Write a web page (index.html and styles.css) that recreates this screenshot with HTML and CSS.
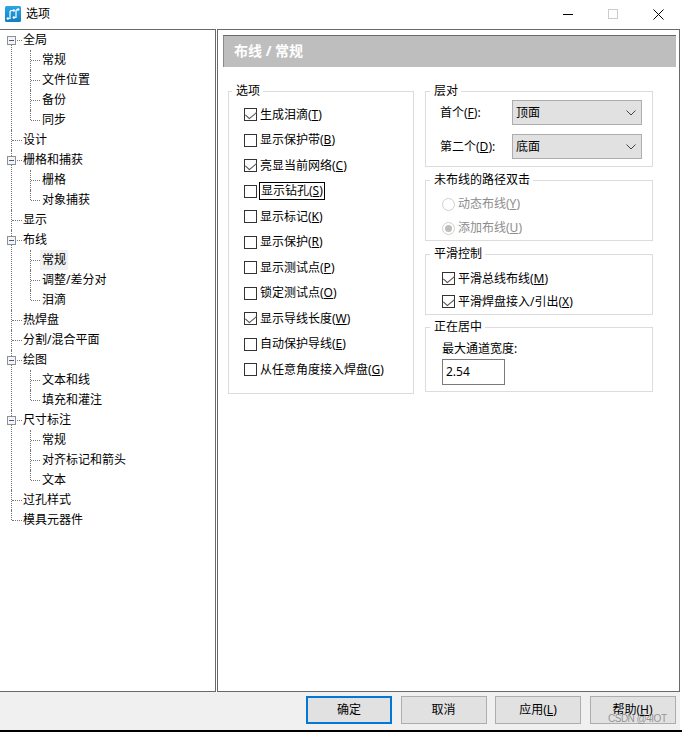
FILE: index.html
```html
<!DOCTYPE html>
<html lang="zh-CN">
<head>
    <meta charset="UTF-8">
    <title>选项</title>
    <link rel="stylesheet" href="styles.css">
</head>
<body>
    <div id="window">
        <!-- Title bar -->
        <div class="title-bar">
            <svg class="app-icon" width="16" height="16" viewBox="0 0 16 16">
                <defs>
                    <linearGradient id="icon-bg" x1="0" y1="0" x2="0" y2="1">
                        <stop offset="0" stop-color="#2aa6e6"/>
                        <stop offset="1" stop-color="#0f7fc0"/>
                    </linearGradient>
                </defs>
                <rect width="16" height="16" rx="1.500" fill="url(#icon-bg)"/>
                <path d="M2.500 12.500h2.500V5.500l1-1h3M8.500 11.500h2.500V4.500l1-1h1.500" fill="none" stroke="#fff" stroke-width="1.200"/>
                <circle cx="2.800" cy="12.500" r="1.200" fill="#fff"/>
                <circle cx="8.800" cy="4.500" r="1.200" fill="#fff"/>
                <circle cx="8.800" cy="11.500" r="1.200" fill="#fff"/>
                <circle cx="13.200" cy="3.500" r="1.200" fill="#fff"/>
            </svg>
            <span class="title-text">选项</span>
            <div class="window-buttons">
                <svg width="10" height="10" viewBox="0 0 10 10"><path d="M0 5.500h10" stroke="#000"/></svg>
                <svg width="10" height="10" viewBox="0 0 10 10"><rect x=".5" y=".5" width="9" height="9" fill="none" stroke="#ccc"/></svg>
                <svg width="11" height="11" viewBox="0 0 11 11"><path d="M.5 .5l10 10M10.500 .5l-10 10" stroke="#000"/></svg>
            </div>
        </div>

        <div class="main">
            <!-- Category tree -->
            <div class="tree-panel">
                <ul class="tree">
                    <li><div class="node"><span class="expander"></span>全局</div>
                        <ul>
                            <li><div class="node">常规</div></li>
                            <li><div class="node">文件位置</div></li>
                            <li><div class="node">备份</div></li>
                            <li><div class="node">同步</div></li>
                        </ul>
                    </li>
                    <li><div class="node">设计</div></li>
                    <li><div class="node"><span class="expander"></span>栅格和捕获</div>
                        <ul>
                            <li><div class="node">栅格</div></li>
                            <li><div class="node">对象捕获</div></li>
                        </ul>
                    </li>
                    <li><div class="node">显示</div></li>
                    <li><div class="node"><span class="expander"></span>布线</div>
                        <ul>
                            <li><div class="node selected">常规</div></li>
                            <li><div class="node">调整/差分对</div></li>
                            <li><div class="node">泪滴</div></li>
                        </ul>
                    </li>
                    <li><div class="node">热焊盘</div></li>
                    <li><div class="node">分割/混合平面</div></li>
                    <li><div class="node"><span class="expander"></span>绘图</div>
                        <ul>
                            <li><div class="node">文本和线</div></li>
                            <li><div class="node">填充和灌注</div></li>
                        </ul>
                    </li>
                    <li><div class="node"><span class="expander"></span>尺寸标注</div>
                        <ul>
                            <li><div class="node">常规</div></li>
                            <li><div class="node">对齐标记和箭头</div></li>
                            <li><div class="node">文本</div></li>
                        </ul>
                    </li>
                    <li><div class="node">过孔样式</div></li>
                    <li><div class="node">模具元器件</div></li>
                </ul>
            </div>

            <!-- Settings page -->
            <div class="page-panel">
                <div class="page-header">布线 / 常规</div>
                <div class="page-body">
                    <fieldset class="group options-group">
                        <legend>选项</legend>
                        <div class="group-body">
                            <div class="check-row"><span class="check on"></span><span>生成泪滴(<u>T</u>)</span></div>
                            <div class="check-row"><span class="check"></span><span>显示保护带(<u>B</u>)</span></div>
                            <div class="check-row"><span class="check on"></span><span>亮显当前网络(<u>C</u>)</span></div>
                            <div class="check-row"><span class="check"></span><span class="focused">显示钻孔(<u>S</u>)</span></div>
                            <div class="check-row"><span class="check"></span><span>显示标记(<u>K</u>)</span></div>
                            <div class="check-row"><span class="check"></span><span>显示保护(<u>R</u>)</span></div>
                            <div class="check-row"><span class="check"></span><span>显示测试点(<u>P</u>)</span></div>
                            <div class="check-row"><span class="check"></span><span>锁定测试点(<u>O</u>)</span></div>
                            <div class="check-row"><span class="check on"></span><span>显示导线长度(<u>W</u>)</span></div>
                            <div class="check-row"><span class="check"></span><span>自动保护导线(<u>E</u>)</span></div>
                            <div class="check-row"><span class="check"></span><span>从任意角度接入焊盘(<u>G</u>)</span></div>
                        </div>
                    </fieldset>

                    <div class="side-column">
                        <fieldset class="group layer-group">
                            <legend>层对</legend>
                            <div class="group-body">
                                <div class="combo-row">
                                    <label>首个(<u>F</u>):</label>
                                    <div class="combo"><span>顶面</span>
                                        <svg width="10" height="6" viewBox="0 0 10 6"><path d="M.5 .5L5 5l4.500-4.500" fill="none" stroke="#444"/></svg>
                                    </div>
                                </div>
                                <div class="combo-row">
                                    <label>第二个(<u>D</u>):</label>
                                    <div class="combo"><span>底面</span>
                                        <svg width="10" height="6" viewBox="0 0 10 6"><path d="M.5 .5L5 5l4.500-4.500" fill="none" stroke="#444"/></svg>
                                    </div>
                                </div>
                            </div>
                        </fieldset>

                        <fieldset class="group route-group">
                            <legend>未布线的路径双击</legend>
                            <div class="group-body">
                                <div class="radio-row"><span class="radio"></span><span>动态布线(<u>Y</u>)</span></div>
                                <div class="radio-row"><span class="radio on"></span><span>添加布线(<u>U</u>)</span></div>
                            </div>
                        </fieldset>

                        <fieldset class="group smooth-group">
                            <legend>平滑控制</legend>
                            <div class="group-body">
                                <div class="check-row short"><span class="check on"></span><span>平滑总线布线(<u>M</u>)</span></div>
                                <div class="check-row short"><span class="check on"></span><span>平滑焊盘接入/引出(<u>X</u>)</span></div>
                            </div>
                        </fieldset>

                        <fieldset class="group center-group">
                            <legend>正在居中</legend>
                            <div class="group-body">
                                <div class="field-label">最大通道宽度:</div>
                                <div class="text-box">2.54</div>
                            </div>
                        </fieldset>
                    </div>
                </div>
            </div>
        </div>

        <!-- Dialog buttons -->
        <div class="footer">
            <div class="btn default">确定</div>
            <div class="btn">取消</div>
            <div class="btn">应用(<u>L</u>)</div>
            <div class="btn">帮助(<u>H</u>)</div>
        </div>
        <div class="watermark">CSDN @4IOT</div>
    </div>
</body>
</html>
```

FILE: styles.css
```css
* {
    box-sizing: border-box;
}

html, body {
    margin: 0;
    padding: 0;
}

body {
    width: 682px;
    height: 732px;
    overflow: hidden;
    background: #fff;
    color: #000;
    font-family: "Noto Sans", "Noto Sans CJK SC", sans-serif;
    font-size: 12px;
    line-height: 16px;
}

#window {
    position: relative;
    width: 682px;
    height: 732px;
    border-bottom: 2px solid #000;
}

.title-bar {
    height: 29px;
    display: flex;
    align-items: center;
    padding: 0 18px 5px 5px;
}

.app-icon {
    margin-top: 4px;
}

.title-text {
    margin-left: 5px;
    margin-top: 3px;
}

.window-buttons {
    margin-left: auto;
    margin-top: 4px;
    display: flex;
    align-items: center;
    gap: 35px;
}

.main {
    width: 680px;
    height: 663px;
    display: flex;
    gap: 1px;
}

.tree-panel {
    width: 216px;
    border: 1px solid #696969;
    border-left: 0;
    background: #fff;
    overflow: hidden;
}

/* Tree with dotted connectors */
.tree, .tree ul {
    list-style: none;
    margin: 0;
    padding: 0;
}

.tree li {
    position: relative;
}

.tree > li::before {
    content: "";
    position: absolute;
    left: 11px;
    top: 0;
    bottom: 0;
    border-left: 1px dotted #777;
}

.tree > li:first-child::before {
    top: 10px;
}

.tree > li:last-child::before {
    bottom: auto;
    height: 10px;
}

.tree ul li::before {
    content: "";
    position: absolute;
    left: 30px;
    top: 0;
    bottom: 0;
    border-left: 1px dotted #777;
}

.tree ul li:last-child::before {
    bottom: auto;
    height: 10px;
}

.node {
    position: relative;
    height: 20px;
    padding-left: 23px;
    line-height: 20px;
    white-space: nowrap;
}

.node::before {
    content: "";
    position: absolute;
    left: 12px;
    top: 10px;
    width: 10px;
    border-top: 1px dotted #777;
}

.tree ul .node {
    padding-left: 42px;
}

.tree ul .node::before {
    left: 31px;
    width: 9px;
}

.selected {
    background: linear-gradient(#f0f0f0, #f0f0f0) no-repeat 40px 0 / 28px 20px;
}

.expander {
    position: absolute;
    z-index: 1;
    left: 7px;
    top: 6px;
    width: 9px;
    height: 9px;
    border: 1px solid #909090;
    background: linear-gradient(#3f5a9e, #3f5a9e) no-repeat center / 5px 1px, #f4f4f4;
}

/* Right side page */
.page-panel {
    width: 463px;
    border: 1px solid #696969;
    background: #fff;
    padding: 5px 3px 0 5px;
}

.page-header {
    height: 32px;
    background: #bebebe;
    border-top: 1px solid #696969;
    border-left: 1px solid #8a8a8a;
    color: #fff;
    font-size: 14px;
    font-weight: bold;
    line-height: 29px;
    padding-left: 10px;
}

.page-body {
    display: flex;
    align-items: flex-start;
    gap: 11px;
    margin-top: 16px;
    padding-left: 5px;
}

.group {
    margin: 0;
    padding: 0;
    min-width: 0;
    border: 1px solid #dcdcdc;
}

.group legend {
    margin-left: 3px;
    padding: 0 3px 0 4px;
    line-height: 16px;
}

.side-column .group legend {
    margin-left: 4px;
}

.options-group {
    width: 186px;
    height: 311px;
}

.options-group .group-body {
    padding: 3px 0 0 15px;
}

.side-column {
    width: 228px;
    display: flex;
    flex-direction: column;
    gap: 5px;
}

.check-row {
    height: 25.5px;
    display: flex;
    align-items: center;
    gap: 3px;
}

.check-row.short {
    height: 23px;
}

.check {
    flex: none;
    position: relative;
    width: 13px;
    height: 13px;
    border: 1px solid #333;
    background: #fff;
}

.check.on::after {
    content: "";
    position: absolute;
    left: 3px;
    top: 0;
    width: 5px;
    height: 9px;
    border: solid #555;
    border-width: 0 1px 1px 0;
    transform: rotate(42deg) skewX(-8deg);
}

.focused {
    border: 1px solid #000;
    margin-left: -1px;
    height: 18px;
    line-height: 16px;
    padding: 0 1px;
}

.layer-group {
    height: 84px;
}

.layer-group .group-body {
    padding: 1px 10px 0 14px;
}

.combo-row {
    display: flex;
    align-items: center;
    justify-content: space-between;
    height: 25px;
    margin-bottom: 9px;
}

.combo {
    width: 130px;
    height: 25px;
    display: flex;
    align-items: center;
    justify-content: space-between;
    padding: 0 5px 0 3px;
    background: #e1e1e1;
    border: 1px solid #adadad;
}

.route-group {
    height: 69px;
    color: #8c8c8c;
}

.route-group .group-body {
    padding: 4px 0 0 16px;
}

.route-group legend {
    color: #000;
}

.radio-row {
    height: 24px;
    display: flex;
    align-items: center;
    gap: 3px;
}

.radio {
    position: relative;
    flex: none;
    width: 13px;
    height: 13px;
    border: 1px solid #cfcfcf;
    border-radius: 50%;
}

.radio.on::after {
    content: "";
    position: absolute;
    left: 2px;
    top: 2px;
    width: 7px;
    height: 7px;
    border-radius: 50%;
    background: #bdbdbd;
}

.smooth-group {
    height: 69px;
}

.smooth-group .group-body {
    padding: 5px 0 0 16px;
}

.center-group {
    height: 73px;
    margin-top: -1px;
}

.center-group .group-body {
    padding: 6px 0 0 16px;
}

.text-box {
    width: 63px;
    height: 26px;
    margin-top: 2px;
    padding-left: 3px;
    border: 1px solid #7a7a7a;
    line-height: 24px;
}

.footer {
    width: 680px;
    height: 38px;
    background: #f0f0f0;
    display: flex;
    gap: 8.500px;
    padding: 4px 0 0 306px;
}

.btn {
    width: 86px;
    height: 28px;
    background: #e1e1e1;
    border: 1px solid #adadad;
    text-align: center;
    line-height: 26px;
}

.btn.default {
    border: 2px solid #0078d7;
    line-height: 24px;
}

.watermark {
    position: absolute;
    left: 608px;
    top: 713px;
    font-family: "Liberation Sans", sans-serif;
    font-size: 10px;
    line-height: 12px;
    letter-spacing: -.5px;
    color: rgba(120, 120, 120, .75);
    white-space: nowrap;
}
```
